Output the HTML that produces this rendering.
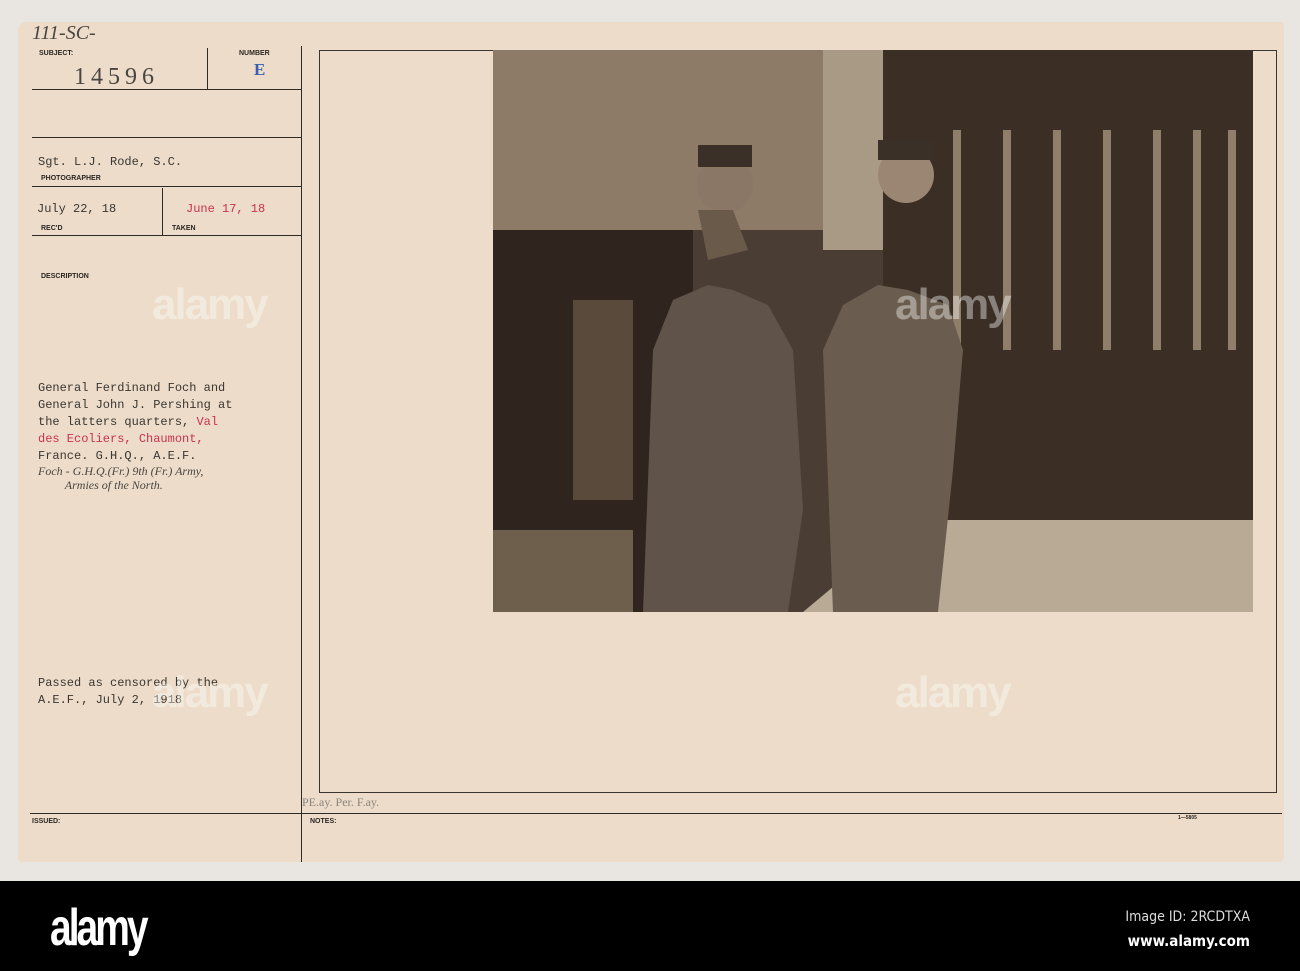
<!DOCTYPE html>
<html><head><style>
body{margin:0;width:1300px;height:971px;background:#e9e5e1;position:relative;overflow:hidden;font-family:"Liberation Mono",monospace}
.card{position:absolute;left:18px;top:22px;width:1266px;height:840px;background:#ecdcc9;border-radius:8px 4px 6px 4px}
.l{position:absolute;background:#2e2a26}
.t{position:absolute;font-size:12px;color:#3a3631;white-space:pre}
.s{position:absolute;font-family:"Liberation Sans",sans-serif;font-weight:bold;font-size:7px;color:#2a2622}
.hw{position:absolute;font-family:"Liberation Serif",serif;font-style:italic;color:#4a4540;white-space:pre}
.ban{position:absolute;left:0;top:881px;width:1300px;height:90px;background:#000}
.wm{position:absolute;font-family:"Liberation Sans",sans-serif;font-weight:bold;color:rgba(255,255,255,.4);letter-spacing:-2px}
</style></head><body>
<div class="card"></div>
<div class="l" style="left:32px;top:89px;width:270px;height:1px"></div>
<div class="l" style="left:32px;top:137px;width:270px;height:1px"></div>
<div class="l" style="left:32px;top:186px;width:270px;height:1px"></div>
<div class="l" style="left:32px;top:235px;width:270px;height:1px"></div>
<div class="l" style="left:207px;top:48px;width:1px;height:41px"></div>
<div class="l" style="left:162px;top:188px;width:1px;height:47px"></div>
<div class="l" style="left:301px;top:46px;width:1px;height:816px"></div>
<div class="l" style="left:30px;top:813px;width:1252px;height:1px"></div>
<div style="position:absolute;left:319px;top:50px;width:958px;height:743px;border:1px solid #3a3530;box-sizing:border-box"></div>
<div class="hw" style="left:32px;top:22px;font-size:20px">111-SC-</div>
<div class="s" style="left:39px;top:50px">SUBJECT:</div>
<div class="hw" style="left:74px;top:64px;font-size:24px;letter-spacing:5px;font-style:normal">14596</div>
<div class="s" style="left:239px;top:50px">NUMBER</div>
<div style="position:absolute;left:254px;top:60px;font-family:'Liberation Serif',serif;font-weight:bold;color:#3b5fb0;font-size:17px">E</div>
<div class="t" style="left:38px;top:155px">Sgt. L.J. Rode, S.C.</div>
<div class="s" style="left:41px;top:175px">PHOTOGRAPHER</div>
<div class="t" style="left:37px;top:202px">July 22, 18</div>
<div class="t" style="left:186px;top:202px;color:#c8334a">June 17, 18</div>
<div class="s" style="left:41px;top:225px">REC'D</div>
<div class="s" style="left:172px;top:225px">TAKEN</div>
<div class="s" style="left:41px;top:273px">DESCRIPTION</div>
<div class="t" style="left:38px;top:380px;line-height:17px">General Ferdinand Foch and
General John J. Pershing at
the latters quarters, <span style="color:#c8334a">Val
des Ecoliers, Chaumont,</span>
France. G.H.Q., A.E.F.</div>
<div class="hw" style="left:38px;top:464px;font-size:12px;line-height:14px">Foch - G.H.Q.(Fr.) 9th (Fr.) Army,
         Armies of the North.</div>
<div class="t" style="left:38px;top:675px;line-height:17px">Passed as censored by the
A.E.F., July 2, 1918</div>
<div class="s" style="left:32px;top:818px">ISSUED:</div>
<div class="s" style="left:310px;top:818px">NOTES:</div>
<div class="s" style="left:1178px;top:815px;font-size:5px">1—5805</div>
<div class="hw" style="left:302px;top:795px;font-size:12px;color:#8a847c;font-style:normal">PE.ay. Per. F.ay.</div>
<svg style="position:absolute;left:493px;top:50px" width="760" height="562">
<rect width="760" height="562" fill="#4a3d33"/>
<rect x="0" y="0" width="330" height="180" fill="#8d7b68"/>
<rect x="330" y="0" width="60" height="200" fill="#a99a86"/>
<rect x="390" y="0" width="370" height="562" fill="#3a2e25"/>
<g fill="#8f7f6a">
<rect x="460" y="80" width="8" height="220"/><rect x="510" y="80" width="8" height="220"/><rect x="560" y="80" width="8" height="220"/><rect x="610" y="80" width="8" height="220"/><rect x="660" y="80" width="8" height="220"/><rect x="700" y="80" width="8" height="220"/><rect x="735" y="80" width="8" height="220"/>
</g>
<rect x="0" y="180" width="200" height="382" fill="#2f251e"/>
<rect x="80" y="250" width="60" height="200" fill="#5a4a3c"/>
<polygon points="310,562 420,470 760,470 760,562" fill="#b8aa95"/>
<rect x="0" y="480" width="140" height="82" fill="#6e5e4c"/>
<path d="M150,562 L160,300 L180,250 L215,235 L240,240 L275,255 L300,300 L310,460 L295,562 Z" fill="#60534a"/>
<circle cx="232" cy="135" r="28" fill="#8a7766"/><rect x="205" y="95" width="54" height="22" fill="#3a3028"/>
<path d="M205,160 L240,160 L255,200 L215,210 Z" fill="#6a5a4a"/>
<path d="M340,562 L330,300 L350,255 L385,235 L415,240 L455,255 L470,300 L460,420 L445,562 Z" fill="#6a5c4e"/>
<circle cx="413" cy="125" r="28" fill="#9a8672"/><rect x="385" y="90" width="56" height="20" fill="#3a3028"/>
</svg>
<div class="wm" style="left:152px;top:280px;font-size:44px">alamy</div>
<div class="wm" style="left:895px;top:280px;font-size:44px">alamy</div>
<div class="wm" style="left:152px;top:668px;font-size:44px">alamy</div>
<div class="wm" style="left:895px;top:668px;font-size:44px">alamy</div>
<div class="ban"></div>
<div style="position:absolute;left:50px;top:898px;font-family:'Liberation Sans',sans-serif;font-weight:bold;color:#fff;font-size:52px;letter-spacing:-4px;transform:scaleX(.75);transform-origin:left">alamy</div>
<div style="position:absolute;right:50px;top:909px;font-family:'DejaVu Sans Condensed','DejaVu Sans',sans-serif;color:#ddd;font-size:14px">Image ID: 2RCDTXA</div>
<div style="position:absolute;right:50px;top:932px;font-family:'DejaVu Sans Condensed','DejaVu Sans',sans-serif;font-weight:bold;color:#fff;font-size:15px">www.alamy.com</div>
</body></html>
